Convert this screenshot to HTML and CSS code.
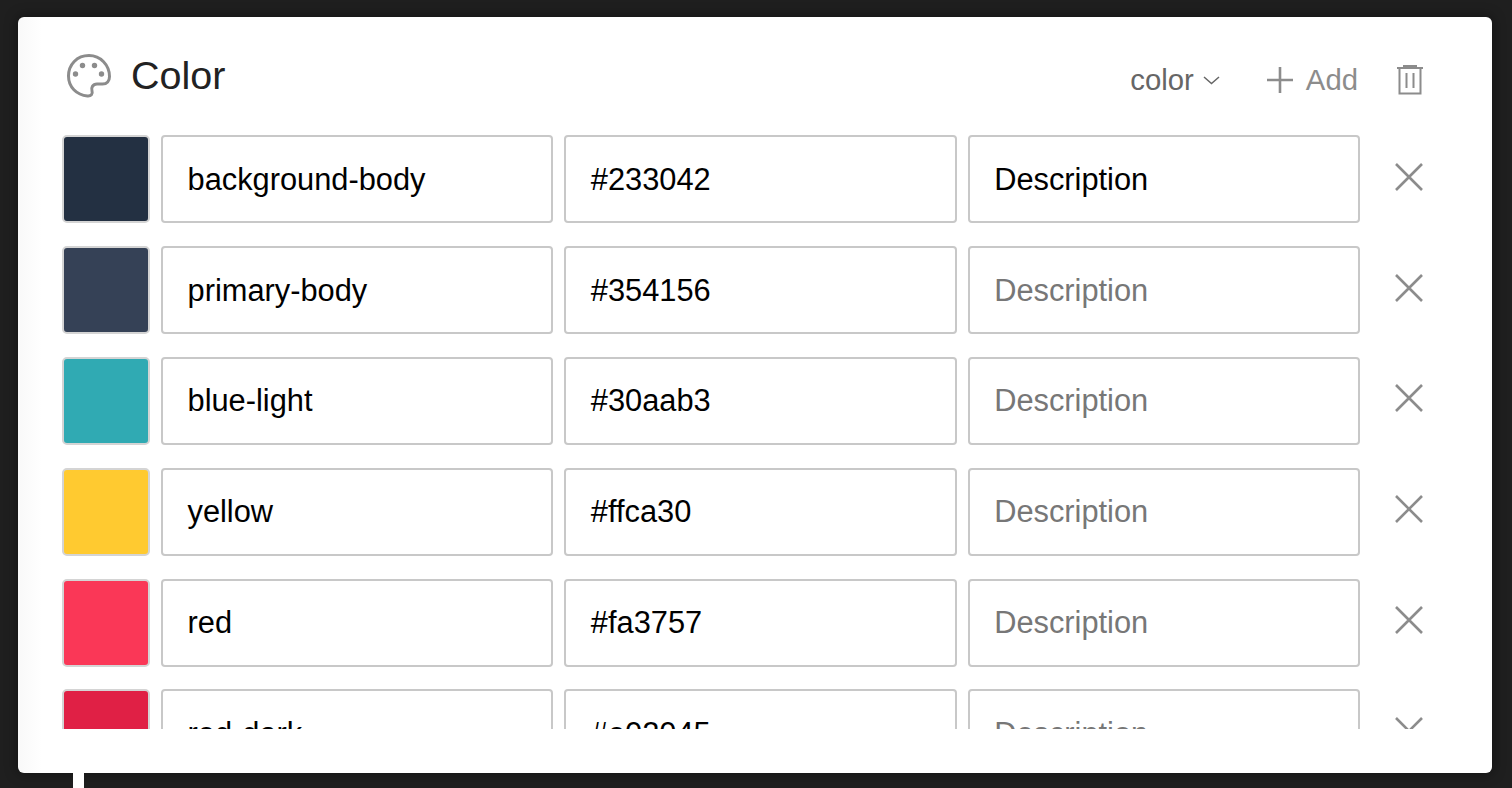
FILE: index.html
```html
<!DOCTYPE html>
<html lang="en">
<head>
    <meta charset="UTF-8">
    <meta name="viewport" content="width=device-width, initial-scale=1.0">
    <title>Color</title>
    <link rel="stylesheet" href="styles.css">
</head>
<body>
    <div class="card">
        <header class="card-header">
            <svg class="palette" viewBox="66 53 46 46" width="46" height="46" fill="none" stroke="#8c8c8c" stroke-width="3">
                <path d="M89 55.500c-12 0-20.500 9-20.500 20.500 0 11 8 19 19 20 3.500.3 5.500-2 4.500-5-1-3 .5-7 5-7h5.500c4.500 0 7-3 7-7.500 0-11.500-9-21-20.500-21z"/>
                <g fill="#8c8c8c" stroke="none">
                    <circle cx="82.500" cy="65.500" r="2.700"/>
                    <circle cx="94.500" cy="65.500" r="2.700"/>
                    <circle cx="75.500" cy="74" r="2.700"/>
                    <circle cx="101.500" cy="74" r="2.700"/>
                </g>
            </svg>
            <h1>Color</h1>
            <div class="actions">
                <span class="type-select">color
                    <svg viewBox="0 0 17 9" width="17" height="9" fill="none" stroke="#666" stroke-width="1.500"><path d="M1 1l7.500 6.500L16 1"/></svg>
                </span>
                <span class="add-btn">
                    <svg viewBox="0 0 26 26" width="26" height="26" stroke="#8c8c8c" stroke-width="2.600"><path d="M0 13h26M13 0v26"/></svg>
                    Add
                </span>
                <svg class="trash" viewBox="0 0 26 30" width="26" height="30" fill="none" stroke="#8c8c8c" stroke-width="2">
                    <path d="M0 3h26M7 3V1h12v2M2.500 3v25.500h21V3M9.500 8v15M16.500 8v15"/>
                </svg>
            </div>
        </header>
        <div class="rows">
            <div class="row">
                <div class="swatch swatch-1"></div>
                <div class="field">background-body</div>
                <div class="field">#233042</div>
                <div class="field">Description</div>
                <svg class="remove" viewBox="0 0 28 28" width="28" height="28" stroke="#8c8c8c" stroke-width="2.600"><path d="M1 1l26 26M27 1L1 27"/></svg>
            </div>
            <div class="row">
                <div class="swatch swatch-2"></div>
                <div class="field">primary-body</div>
                <div class="field">#354156</div>
                <div class="field placeholder">Description</div>
                <svg class="remove" viewBox="0 0 28 28" width="28" height="28" stroke="#8c8c8c" stroke-width="2.600"><path d="M1 1l26 26M27 1L1 27"/></svg>
            </div>
            <div class="row">
                <div class="swatch swatch-3"></div>
                <div class="field">blue-light</div>
                <div class="field">#30aab3</div>
                <div class="field placeholder">Description</div>
                <svg class="remove" viewBox="0 0 28 28" width="28" height="28" stroke="#8c8c8c" stroke-width="2.600"><path d="M1 1l26 26M27 1L1 27"/></svg>
            </div>
            <div class="row">
                <div class="swatch swatch-4"></div>
                <div class="field">yellow</div>
                <div class="field">#ffca30</div>
                <div class="field placeholder">Description</div>
                <svg class="remove" viewBox="0 0 28 28" width="28" height="28" stroke="#8c8c8c" stroke-width="2.600"><path d="M1 1l26 26M27 1L1 27"/></svg>
            </div>
            <div class="row">
                <div class="swatch swatch-5"></div>
                <div class="field">red</div>
                <div class="field">#fa3757</div>
                <div class="field placeholder">Description</div>
                <svg class="remove" viewBox="0 0 28 28" width="28" height="28" stroke="#8c8c8c" stroke-width="2.600"><path d="M1 1l26 26M27 1L1 27"/></svg>
            </div>
            <div class="row">
                <div class="swatch swatch-6"></div>
                <div class="field">red-dark</div>
                <div class="field">#e02045</div>
                <div class="field placeholder">Description</div>
                <svg class="remove" viewBox="0 0 28 28" width="28" height="28" stroke="#8c8c8c" stroke-width="2.600"><path d="M1 1l26 26M27 1L1 27"/></svg>
            </div>
        </div>
    </div>
    <div class="stem"></div>
</body>
</html>
```

FILE: styles.css
```css
html, body {
    height: 100%;
}

body {
    margin: 0;
    padding: 17px 20px 0 18px;
    box-sizing: border-box;
    overflow: hidden;
    background-color: #1f1f1f;
    font-family: "Liberation Sans", Arial, sans-serif;
}

.card {
    height: 756px;
    padding: 0 69px 0 44px;
    box-sizing: border-box;
    background: linear-gradient(to right, #f9f9f9, #fff 24px);
    border-radius: 6px;
    box-shadow: 0 0 14px rgba(0, 0, 0, 0.45);
}

.stem {
    width: 11px;
    height: 15px;
    margin-left: 55px;
    background-color: #fff;
}

.card-header {
    display: flex;
    align-items: center;
    height: 118.400px;
    padding-left: 4px;
    box-sizing: border-box;
}

.palette {
    flex: none;
}

h1 {
    margin: 0 0 2px 19px;
    font-size: 39.500px;
    font-weight: normal;
    color: #222;
}

.actions {
    display: flex;
    align-items: center;
    margin: 8px 0 0 auto;
}

.type-select {
    display: flex;
    align-items: center;
    gap: 9px;
    font-size: 29.300px;
    color: #666;
}

.add-btn {
    display: flex;
    align-items: center;
    gap: 13px;
    margin-left: 47px;
    font-size: 29.300px;
    color: #8c8c8c;
}

.trash {
    margin-left: 39px;
}

.rows {
    display: flex;
    flex-direction: column;
    gap: 22.800px;
    height: 593.600px;
    overflow: hidden;
}

.row {
    flex: none;
    display: grid;
    grid-template-columns: 88px repeat(3, 1fr) 52px;
    column-gap: 11px;
    height: 88px;
}

.swatch {
    box-sizing: border-box;
    border: 2px solid #d4d4d4;
    border-radius: 5px;
}

.swatch-1 { background-color: #233042; }
.swatch-2 { background-color: #354156; }
.swatch-3 { background-color: #30aab3; }
.swatch-4 { background-color: #ffca30; }
.swatch-5 { background-color: #fa3757; }
.swatch-6 { background-color: #e02045; }

.field {
    display: flex;
    align-items: center;
    padding: 1px 24.500px 0;
    box-sizing: border-box;
    border: 2px solid #c8c8c8;
    border-radius: 4px;
    font-size: 30.800px;
    color: #000;
}

.placeholder {
    color: #777;
}

.remove {
    margin: 27.500px 0 0 24px;
}
```
